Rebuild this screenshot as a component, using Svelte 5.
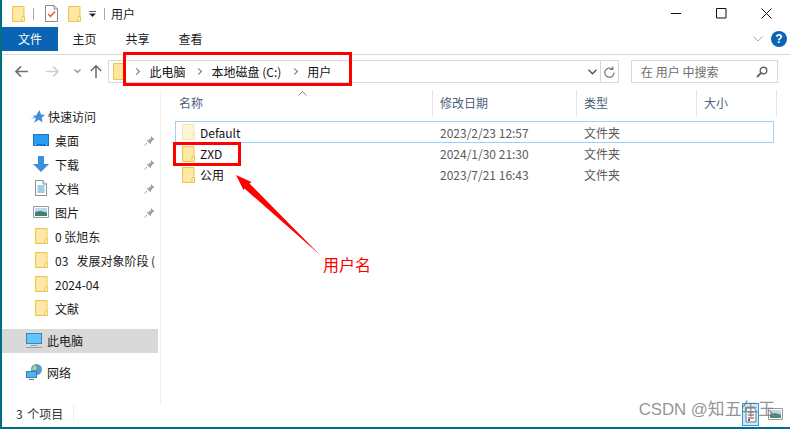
<script>
	const quick = [
		{ name: '桌面', icon: 'desktop', pin: true },
		{ name: '下载', icon: 'download', pin: true },
		{ name: '文档', icon: 'docs', pin: true },
		{ name: '图片', icon: 'pics', pin: true },
		{ name: '0 张旭东', icon: 'folder' },
		{ name: '03   发展对象阶段 (', icon: 'folder' },
		{ name: '2024-04', icon: 'folder' },
		{ name: '文献', icon: 'folder' }
	];

	const files = [
		{ name: 'Default', date: '2023/2/23 12:57', type: '文件夹', selected: true, faded: true },
		{ name: 'ZXD', date: '2024/1/30 21:30', type: '文件夹' },
		{ name: '公用', date: '2023/7/21 16:43', type: '文件夹' }
	];
</script>

{#snippet folder(faded = false)}
	<svg class="folder" class:faded width="13" height="16" viewBox="0 0 13 16">
		<path d="M.5.5h11.5v15H.5z" fill="#ffe08f" stroke="#eec64f" />
		<path d="M1.500 1.500h9.500v9h-1.500v4h-8z" fill="#ffe9a8" />
		<path d="M10 10.500h2.500v5H10z" fill="#fff3c8" stroke="#eec64f" />
	</svg>
{/snippet}

<div class="window">
	<header class="titlebar">
		<div class="quick-access">
			{@render folder()}
			<span class="bar"></span>
			<svg class="check" width="13" height="17" viewBox="0 0 13 17">
				<path d="M.5.5h8.500l3.500 3.500v12.500H.5z" fill="#fff" stroke="#8a8a8a" />
				<path d="M9 .5v3.500h3.500" fill="none" stroke="#8a8a8a" />
				<path d="M3 9l2.500 2.500L10 6.500" fill="none" stroke="#e2582a" stroke-width="1.4" />
			</svg>
			{@render folder()}
			<svg class="drop" width="7" height="6" viewBox="0 0 8 7">
				<path d="M0 0h8v1H0zM0 3h8L4 7z" fill="#222" />
			</svg>
			<span class="bar"></span>
			<span class="title">用户</span>
		</div>
		<div class="window-buttons">
			<svg width="11" height="11" viewBox="0 0 11 11"><path d="M0 5.500h10" stroke="#111" /></svg>
			<svg width="11" height="11" viewBox="0 0 11 11"><path d="M.5.5h9.500v9.500H.5z" fill="none" stroke="#111" /></svg>
			<svg width="11" height="11" viewBox="0 0 11 11"><path d="M.5.5l10 10M10.500.5l-10 10" stroke="#111" /></svg>
		</div>
	</header>

	<div class="ribbon">
		<span class="tab file">文件</span>
		<span class="tab">主页</span>
		<span class="tab">共享</span>
		<span class="tab">查看</span>
		<svg class="collapse" width="10" height="6" viewBox="0 0 10 6"><path d="M.5.5L5 5 9.500.5" fill="none" stroke="#a8a8a8" /></svg>
		<span class="help">?</span>
	</div>

	<div class="nav">
		<div class="arrows">
			<svg width="13" height="11" viewBox="0 0 13 11"><path d="M6 .5l-5 5 5 5M1 5.500h12" fill="none" stroke="#6f6f6f" stroke-width="1.6" /></svg>
			<svg width="13" height="11" viewBox="0 0 13 11"><path d="M7 .5l5 5-5 5M12 5.500H0" fill="none" stroke="#d0d0d0" stroke-width="1.6" /></svg>
			<svg width="7" height="5" viewBox="0 0 7 5"><path d="M.5.5l3 3 3-3" fill="none" stroke="#8a8a8a" stroke-width="1.2" /></svg>
			<svg width="12" height="13" viewBox="0 0 12 13"><path d="M.8 6L6 .8 11.200 6M6 1v12" fill="none" stroke="#6f6f6f" stroke-width="1.6" /></svg>
		</div>
		<div class="address">
			<svg width="13" height="17" viewBox="0 0 13 17"><path d="M.5.5h12v16H.5z" fill="#ffe6a0" stroke="#eec64f" /></svg>
			<div class="crumbs">
				<span class="gt"></span><span>此电脑</span>
				<span class="gt"></span><span>本地磁盘 (C:)</span>
				<span class="gt"></span><span>用户</span>
			</div>
			<svg class="addr-drop" width="9" height="6" viewBox="0 0 9 6"><path d="M.5.7l4 4 4-4" fill="none" stroke="#555" stroke-width="1.4" /></svg>
			<div class="refresh">
				<svg width="11" height="12" viewBox="0 0 11 12"><path d="M8.500 3.200A4.600 4.600 0 1 0 10 6.500M8.800.5v3H5.800" fill="none" stroke="#777" stroke-width="1.2" /></svg>
			</div>
		</div>
		<div class="search">
			<span>在 用户 中搜索</span>
			<svg width="12" height="12" viewBox="0 0 12 12"><circle cx="7.500" cy="4.500" r="3.300" fill="none" stroke="#666" stroke-width="1.4" /><path d="M5 7L1 11" stroke="#666" stroke-width="2" /></svg>
		</div>
	</div>

	<div class="main">
		<aside class="sidebar">
			<div class="side-row head quick">
				<svg width="15" height="13" viewBox="0 0 15 13"><path d="M9.500 0l1.300 4.300L15 5l-3.200 2.600.7 4.800-3.700-2.600L4 13l2-4.800H.5l4.500-1L2.500 5.500H6z" fill="#3f8fdc" /></svg>
				<span>快速访问</span>
			</div>
			{#each quick as item}
				<div class="side-row item">
					<span class="side-icon">
						{#if item.icon === 'desktop'}
							<svg width="16" height="12" viewBox="0 0 16 12"><path d="M0 0h16v12H0z" fill="#1377cc" /><path d="M1 1h14v9H1z" fill="#2b9bf0" /><path d="M2 10.500h1M13 10.500h1" stroke="#bfe2fa" /></svg>
						{:else if item.icon === 'download'}
							<svg width="16" height="16" viewBox="0 0 16 16"><path d="M5 0h6v8h5l-8 8-8-8h5z" fill="#3a8edb" /></svg>
						{:else if item.icon === 'docs'}
							<svg width="12" height="16" viewBox="0 0 12 16"><path d="M.5.5h7.500l3.500 3.500v11.500H.5z" fill="#fff" stroke="#8f8f8f" /><path d="M8 .5v3.500h3.500" fill="#eee" stroke="#8f8f8f" /><path d="M2.500 6h7M2.500 8h7M2.500 10h7M2.500 12h7" stroke="#3d9bd8" /></svg>
						{:else if item.icon === 'pics'}
							<svg width="16" height="12" viewBox="0 0 16 12"><path d="M.5.5h15v11H.5z" fill="#fff" stroke="#9a9a9a" /><path d="M2 2h12v4H2z" fill="#b9d8ea" /><path d="M2 6l5-1 7 1.500V10H2z" fill="#3f7f74" /></svg>
						{:else}
							{@render folder()}
						{/if}
					</span>
					<span class="label">{item.name}</span>
					{#if item.pin}
						<svg class="pin" width="11" height="11" viewBox="0 0 11 11"><path d="M6.500.5l4 4-1.500.5-2 2.500-.3 2-4.200-4.200 2-.3L7 3z" fill="#9aa3ad" /><path d="M3 8L.5 10.500" stroke="#9aa3ad" /></svg>
					{/if}
				</div>
			{/each}
			<div class="side-row head pc">
				<svg width="16" height="15" viewBox="0 0 16 15"><path d="M0 0h16v11H0z" fill="#3f86b8" /><path d="M1 1h14v9H1z" fill="#63c4fb" /><path d="M5 12h6v1H5zM0 14h16v1H0z" fill="#8aa5b8" /></svg>
				<span>此电脑</span>
			</div>
			<div class="side-row head net">
				<svg width="16" height="16" viewBox="0 0 16 16"><circle cx="10.500" cy="5.500" r="5.500" fill="#5a9bc9" /><path d="M8 1.500c2 0 3 2 2.500 3.500S7 6 6 5z" fill="#b7d98f" /><path d="M0 7h11v7H0z" fill="#2f7fb8" /><path d="M1 8h9v5H1z" fill="#58b2ec" /><path d="M3 15h5v1H3z" fill="#4a7a9a" /></svg>
				<span>网络</span>
			</div>
		</aside>

		<section class="content">
			<svg class="sort" width="9" height="5" viewBox="0 0 9 5"><path d="M.5 4.500l4-4 4 4" fill="none" stroke="#8a8a8a" /></svg>
			<div class="columns">
				<span>名称</span>
				<span>修改日期</span>
				<span>类型</span>
				<span>大小</span>
			</div>
			<div class="rows">
				{#each files as file}
					<div class="row" class:selected={file.selected}>
						<span class="name">{@render folder(file.faded)}{file.name}</span>
						<span class="meta">{file.date}</span>
						<span class="meta">{file.type}</span>
					</div>
				{/each}
			</div>
		</section>
	</div>

	<footer class="status"><span>3 个项目</span></footer>

	<div class="mark crumb-mark"></div>
	<div class="mark zxd-mark"></div>
	<svg class="arrow" width="90" height="85" viewBox="0 0 90 85">
		<path d="M2 1L17.500 8 15.500 9.500 86 81 10.500 14.500 9.500 16z" fill="#ff0000" />
	</svg>
	<span class="note">用户名</span>
	<div class="drag-ghost">
		<svg width="17" height="21" viewBox="0 0 17 21"><path d="M3 4h8l2 2v12H3z" fill="#f4f8fb" stroke="#777" /><path d="M5 8h6M5 11h6M5 14h6" stroke="#555" /><path d="M5 15h2v2H5z" fill="#d33" /></svg>
	</div>
	<svg class="drag-thumb" width="15" height="12" viewBox="0 0 15 12"><path d="M.5.5h14v11H.5z" fill="#fff" stroke="#999" /><path d="M2 2h11v4H2z" fill="#b9d8ea" /><path d="M2 6l5-1 6 1.500V10H2z" fill="#4f8a76" /></svg>
	<span class="watermark">CSDN @知五年玉</span>
</div>

<style>
	:global(body) {
		background: #fff;
	}

	.window {
		position: relative;
		box-sizing: border-box;
		width: 790px;
		height: 429px;
		overflow: hidden;
		display: flex;
		flex-direction: column;
		background: #fff;
		border-left: 2px solid #006f7f;
		border-bottom: 2px solid #006f7f;
		color: #1a1a1a;
		font: 12px 'Noto Sans CJK SC', 'Noto Sans', sans-serif;
	}

	.titlebar {
		flex: none;
		display: flex;
		justify-content: space-between;
		height: 27px;
	}

	.quick-access {
		display: flex;
		align-items: center;
		padding-left: 10px;
	}

	.bar {
		width: 1px;
		height: 12px;
		margin: 0 7px 0 8px;
		background: #aaa;
	}

	.check {
		margin: 0 10px 0 4px;
	}

	.drop {
		margin: 0 0 0 8px;
	}

	.title {
		margin-left: -1px;
	}

	.folder {
		flex: none;
	}

	.folder.faded {
		opacity: 0.45;
	}

	.window-buttons {
		display: flex;
		align-items: center;
		gap: 34px;
		padding-right: 18px;
	}

	.ribbon {
		flex: none;
		display: flex;
		align-items: center;
		height: 24px;
		padding-right: 3px;
		border-bottom: 1px solid #dadbdc;
		margin-bottom: 5px;
		padding-bottom: 3px;
	}

	.tab {
		width: 53px;
		line-height: 24px;
		text-align: center;
	}

	.tab.file {
		width: 56px;
		background: #0b63b4;
		color: #fff;
	}

	.collapse {
		margin-left: auto;
		margin-right: 8px;
	}

	.help {
		width: 16px;
		height: 16px;
		border-radius: 50%;
		background: #0b63b4;
		color: #fff;
		font: bold 12px/16px 'Liberation Sans', sans-serif;
		text-align: center;
	}

	.nav {
		flex: none;
		display: flex;
		align-items: stretch;
		height: 23px;
		padding-right: 12px;
	}

	.arrows {
		width: 106px;
		display: flex;
		align-items: center;
		padding-left: 13px;
		box-sizing: border-box;
	}

	.arrows svg:nth-child(2) {
		margin-left: 18px;
	}

	.arrows svg:nth-child(3) {
		margin-left: 15px;
	}

	.arrows svg:nth-child(4) {
		margin-left: 9px;
	}

	.address {
		flex: 1;
		display: flex;
		align-items: center;
		padding-left: 4px;
		border: 1px solid #d9d9d9;
		color: #111;
	}

	.crumbs {
		display: flex;
		align-items: center;
		flex: 1;
		padding-left: 8px;
		gap: 10.5px;
	}

	.gt {
		width: 4px;
		height: 4px;
		border-top: 1px solid #777;
		border-right: 1px solid #777;
		transform: rotate(45deg);
	}

	.addr-drop {
		margin-right: 3px;
	}

	.refresh {
		align-self: stretch;
		display: flex;
		align-items: center;
		justify-content: center;
		width: 17px;
		border-left: 1px solid #d9d9d9;
	}

	.search {
		width: 147px;
		box-sizing: border-box;
		margin-left: 12px;
		display: flex;
		align-items: center;
		justify-content: space-between;
		padding: 0 9px;
		border: 1px solid #d9d9d9;
		color: #6d6d6d;
	}

	.main {
		flex: 1;
		min-height: 0;
		display: flex;
		padding-top: 7px;
	}

	.sidebar {
		flex: none;
		width: 159px;
		box-sizing: border-box;
		padding: 15px 0 0;
		border-right: 1px solid #f0f0f0;
	}

	.side-row {
		display: flex;
		align-items: center;
		height: 24px;
		width: 156px;
		white-space: nowrap;
		overflow: hidden;
	}

	.side-row.head {
		padding-left: 28px;
		box-sizing: border-box;
		gap: 3px;
	}

	.side-row.quick {
		height: 23px;
	}

	.side-row.item {
		padding-left: 31px;
		box-sizing: border-box;
	}

	.side-icon {
		flex: none;
		width: 16px;
		margin-right: 6px;
		display: flex;
		justify-content: center;
	}

	.label {
		flex: 1;
		overflow: hidden;
		white-space: pre;
	}

	.pin {
		flex: none;
		margin-right: 3px;
	}

	.side-row.pc {
		margin-top: 9px;
		padding-bottom: 2px;
		background: #d9d9d9;
		padding-left: 24px;
		gap: 5px;
	}

	.side-row.net {
		margin-top: 7px;
		padding-left: 24px;
		gap: 5px;
	}

	.content {
		position: relative;
		flex: 1;
		min-width: 0;
	}

	.sort {
		position: absolute;
		left: 137px;
		top: 1px;
	}

	.columns {
		display: grid;
		grid-template-columns: 272px 144px 120px 80px;
		height: 26px;
		margin-bottom: 5px;
		color: #4c607a;
	}

	.columns span {
		padding-left: 7px;
		line-height: 26px;
		border-right: 1px solid #e5e5e5;
	}

	.columns span:first-child {
		padding-left: 18px;
	}

	.rows {
		padding-left: 14px;
		width: 599px;
	}

	.row {
		display: grid;
		grid-template-columns: 264px 144px auto;
		align-items: center;
		box-sizing: border-box;
		height: 21px;
		border: 1px solid transparent;
	}

	.row.selected {
		height: 22px;
		border-color: #99d1ff;
	}

	.name {
		display: flex;
		align-items: center;
		gap: 5px;
		padding-left: 6px;
		color: #111;
	}

	.meta {
		color: #5a5a5a;
	}

	.status {
		flex: none;
		height: 22px;
		box-sizing: border-box;
		padding: 0 0 5px 14px;
		display: flex;
		align-items: center;
		color: #333;
		word-spacing: 2px;
	}

	.status span {
		padding-right: 10px;
		border-right: 1px solid #eee;
	}

	.mark {
		position: absolute;
		box-sizing: border-box;
		border: 3px solid #f00;
	}

	.crumb-mark {
		left: 121px;
		top: 52px;
		width: 229px;
		height: 34px;
	}

	.zxd-mark {
		left: 171px;
		top: 142px;
		width: 68px;
		height: 24px;
	}

	.arrow {
		position: absolute;
		left: 232px;
		top: 174px;
	}

	.note {
		position: absolute;
		left: 321px;
		top: 252px;
		color: #f00;
		font-size: 16px;
		line-height: 24px;
	}

	.watermark {
		position: absolute;
		right: 15px;
		top: 399px;
		color: rgba(120, 120, 120, 0.8);
		font-size: 16.8px;
		line-height: 22px;
		font-family: 'Liberation Sans', 'Noto Sans CJK SC', sans-serif;
	}

	.drag-ghost {
		position: absolute;
		left: 740px;
		top: 403px;
		box-sizing: border-box;
		width: 17px;
		height: 23px;
		border: 1px solid #26a0da;
		background: #cce8ff;
	}

	.drag-thumb {
		position: absolute;
		left: 766px;
		top: 408px;
	}
</style>
